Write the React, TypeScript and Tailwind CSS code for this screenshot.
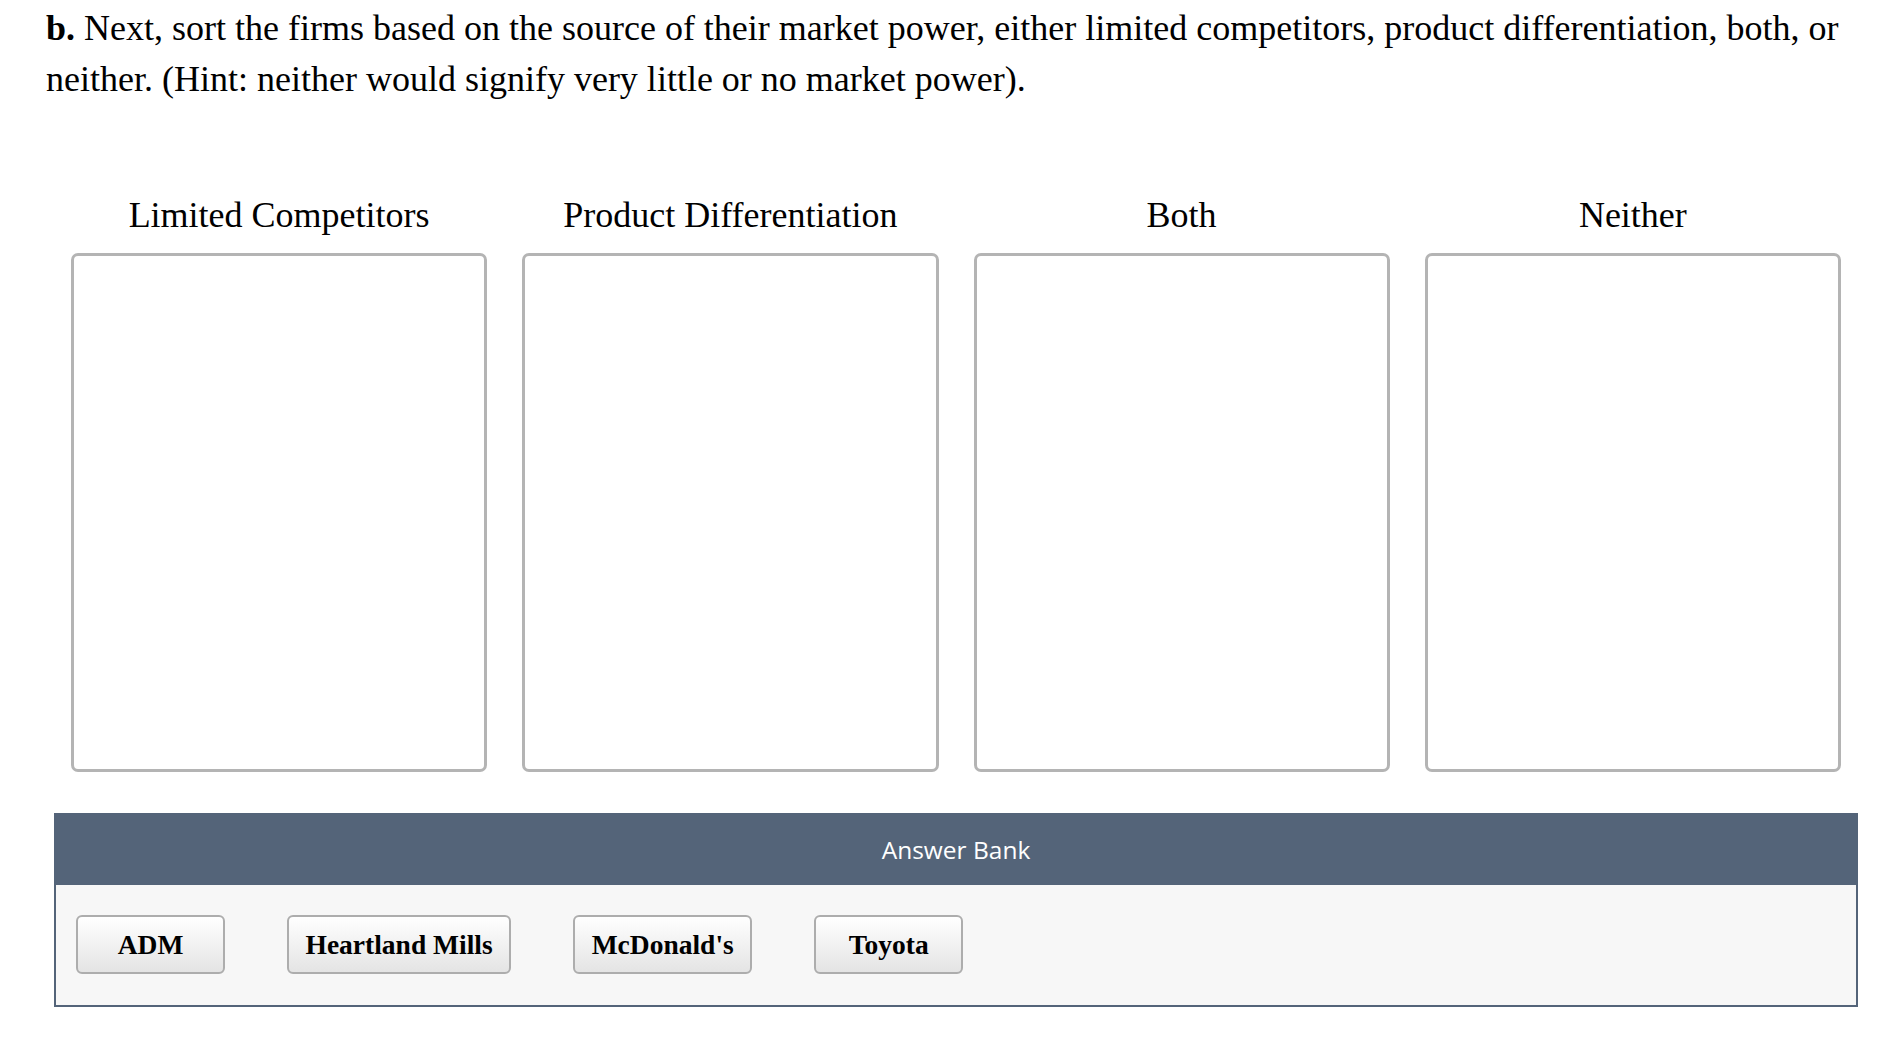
import React from "react";

const columns = ["Limited Competitors", "Product Differentiation", "Both", "Neither"];
const answers = ["ADM", "Heartland Mills", "McDonald's", "Toyota"];

function DropColumn({ title }: { title: string }) {
  return (
    <div className="flex flex-col">
      <p className="text-center text-[36px] leading-[40px] text-black">{title}</p>
      <div className="mt-[18px] h-[519px] rounded-[7px] border-[3px] border-[#b4b4b4] bg-white" />
    </div>
  );
}

function AnswerChip({ label }: { label: string }) {
  return (
    <button
      type="button"
      className="h-[59px] min-w-[149px] px-[16.5px] rounded-[6px] border-2 border-[#adadad] bg-linear-to-b from-white to-[#e4e4e4] text-[27.5px] font-bold text-black leading-none"
    >
      {label}
    </button>
  );
}

export default function App() {
  return (
    <div
      className="min-h-screen bg-white pl-[46px] pt-[3px]"
      style={{ fontFamily: '"Liberation Serif", "Times New Roman", serif' }}
    >
      <div className="w-[1812px]">
        <p className="text-[36px] leading-[51px] text-black">
          <span className="font-bold">b.</span> Next, sort the firms based on the source of their
          market power, either limited competitors, product differentiation, both, or neither.
          (Hint: neither would signify very little or no market power).
        </p>

        <div className="ml-[8px] w-[1804px] mt-[90px]">
          <div className="grid grid-cols-4 gap-x-[35px] px-[17px]">
            {columns.map((c) => (
              <DropColumn key={c} title={c} />
            ))}
          </div>

          <div className="mt-[41px] border-2 border-[#546479]">
            <div
              className="h-[70px] bg-[#546479] flex items-center justify-center text-white text-[24.5px]"
              style={{ fontFamily: '"Open Sans", "Noto Sans", sans-serif' }}
            >
              Answer Bank
            </div>
            <div className="bg-[#f7f7f7] flex items-center gap-[62px] pl-[20px] pt-[30px] pb-[31px]">
              {answers.map((a) => (
                <AnswerChip key={a} label={a} />
              ))}
            </div>
          </div>
        </div>
      </div>
    </div>
  );
}
